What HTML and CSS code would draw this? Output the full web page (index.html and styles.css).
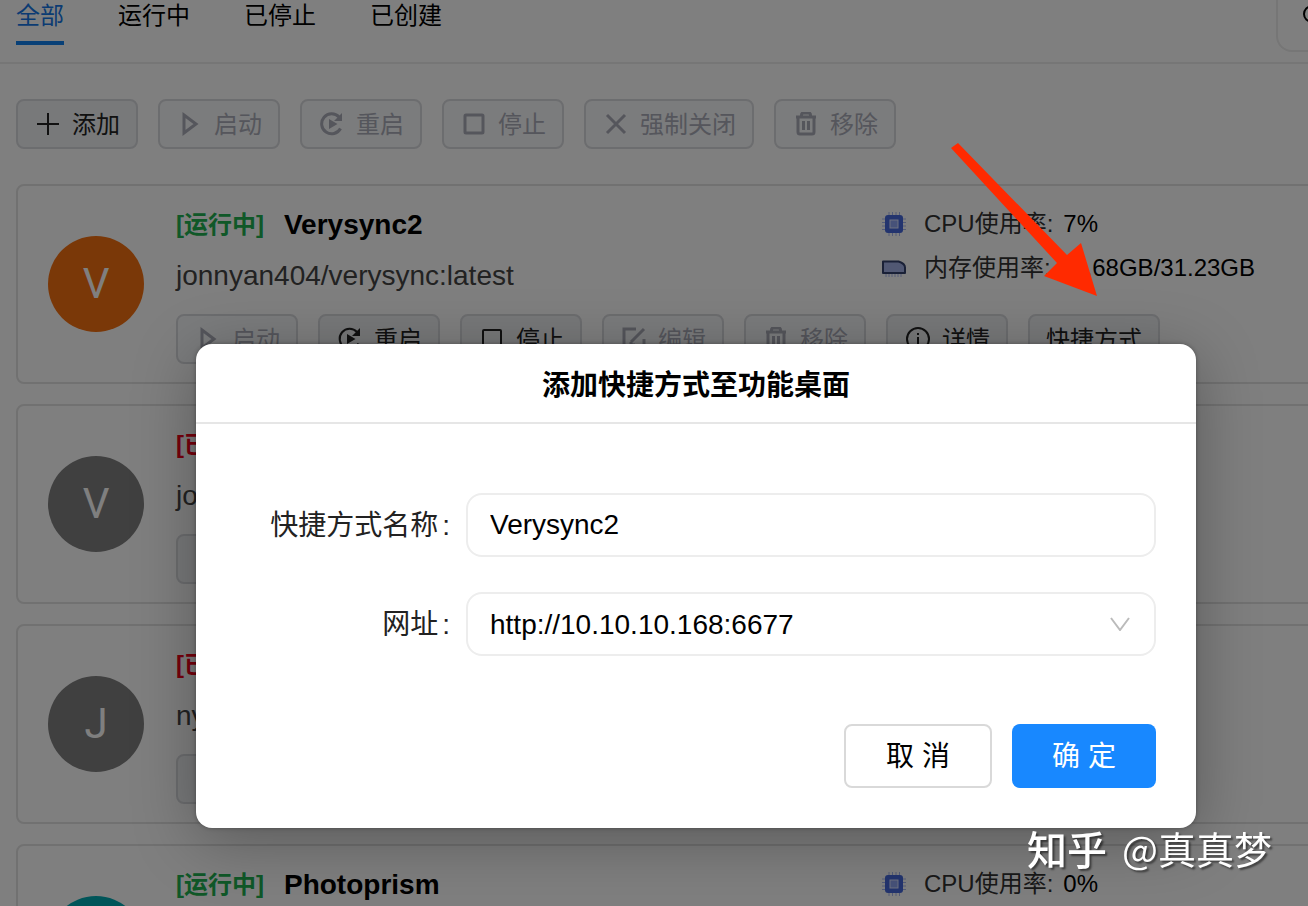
FILE: index.html
```html
<!DOCTYPE html>
<html lang="zh-CN">
<head>
  <meta charset="UTF-8" />
  <title>容器管理</title>
  <meta name="viewport" content="width=device-width, initial-scale=1" />
  <link rel="stylesheet" href="styles.css">
</head>
<body>
  <svg width="0" height="0" class="sprite">
    <symbol id="i-plus" viewBox="0 0 24 24"><path d="M12 1v22M1 12h22" /></symbol>
    <symbol id="i-play" viewBox="0 0 24 24"><path d="M6 3L18 12 6 21z" /></symbol>
    <symbol id="i-restart" viewBox="0 0 24 24">
      <path d="M20.500 16.500A10 10 0 1 1 19 5" />
      <path class="solid" d="M22 1v8H14zM9 7l8.500 5-8.500 5z" />
    </symbol>
    <symbol id="i-stop" viewBox="0 0 24 24"><rect x="3" y="3" width="18" height="18" rx="1" /></symbol>
    <symbol id="i-close" viewBox="0 0 24 24"><path d="M3 3l18 18M21 3L3 21" /></symbol>
    <symbol id="i-trash" viewBox="0 0 24 24">
      <path d="M2 5h20M7.500 5V3q0-2 2-2h5q2 0 2 2V5M4 5v15q0 2 2 2h12q2 0 2-2V5M9.500 9v9M14.500 9v9" />
    </symbol>
    <symbol id="i-edit" viewBox="0 0 24 24">
      <path d="M14 2H2v20h20V12M22 2L9 15M9 15v3h4" />
    </symbol>
    <symbol id="i-info" viewBox="0 0 24 24">
      <circle cx="12" cy="12" r="11" />
      <path d="M12 10v8M12 6v2" />
    </symbol>
    <symbol id="i-cpu" viewBox="0 0 24 24">
      <path d="M7 0v24M10.500 0v24M14 0v24M17.500 0v24M0 7h24M0 10.500h24M0 14h24M0 17.500h24" stroke="#a9b8f0" stroke-width="1" />
      <rect x="3" y="3" width="18" height="18" rx="3" fill="#4668dc" stroke="none" />
      <rect x="8" y="8" width="8" height="8" fill="#8fa5f2" stroke="#dbe2ff" stroke-width="1" />
    </symbol>
    <symbol id="i-mem" viewBox="0 0 24 24">
      <path d="M4 18v3M7 18v3M10 18v3M13 18v3M16 18v3M19 18v3" stroke="#a9b8f0" stroke-width="1" />
      <path d="M1 5.500h15.500q6.500 2 6.500 6V17H1z" fill="#a3b1e6" stroke="#35426e" stroke-width="2" stroke-linejoin="round" />
    </symbol>
  </svg>

  <header class="topbar">
    <nav class="tabs">
      <a href="#all" class="active">全部</a>
      <a href="#running">运行中</a>
      <a href="#stopped">已停止</a>
      <a href="#created">已创建</a>
    </nav>
    <button class="search" type="button" aria-label="搜索">
      <svg class="icon" viewBox="0 0 24 24"><circle cx="10" cy="10" r="8" /><path d="M16 16l6 6" /></svg>
    </button>
  </header>

  <main>
    <div class="btn-row toolbar">
      <button class="btn" type="button"><svg class="icon"><use href="#i-plus" /></svg><span>添加</span></button>
      <button class="btn" type="button" disabled><svg class="icon"><use href="#i-play" /></svg><span>启动</span></button>
      <button class="btn" type="button" disabled><svg class="icon"><use href="#i-restart" /></svg><span>重启</span></button>
      <button class="btn" type="button" disabled><svg class="icon"><use href="#i-stop" /></svg><span>停止</span></button>
      <button class="btn" type="button" disabled><svg class="icon"><use href="#i-close" /></svg><span>强制关闭</span></button>
      <button class="btn" type="button" disabled><svg class="icon"><use href="#i-trash" /></svg><span>移除</span></button>
    </div>

    <section class="card">
      <div class="avatar orange">V</div>
      <div class="card-body">
        <h2><span class="status running">[运行中]</span>Verysync2</h2>
        <p class="image">jonnyan404/verysync:latest</p>
        <ul class="stats">
          <li><svg class="icon"><use href="#i-cpu" /></svg>CPU使用率: <b>7%</b></li>
          <li><svg class="icon"><use href="#i-mem" /></svg>内存使用率: <b>11.68GB/31.23GB</b></li>
        </ul>
        <div class="btn-row">
          <button class="btn" type="button" disabled><svg class="icon"><use href="#i-play" /></svg><span>启动</span></button>
          <button class="btn" type="button"><svg class="icon"><use href="#i-restart" /></svg><span>重启</span></button>
          <button class="btn" type="button"><svg class="icon"><use href="#i-stop" /></svg><span>停止</span></button>
          <button class="btn" type="button" disabled><svg class="icon"><use href="#i-edit" /></svg><span>编辑</span></button>
          <button class="btn" type="button" disabled><svg class="icon"><use href="#i-trash" /></svg><span>移除</span></button>
          <button class="btn" type="button"><svg class="icon"><use href="#i-info" /></svg><span>详情</span></button>
          <button class="btn" type="button"><span>快捷方式</span></button>
        </div>
      </div>
    </section>

    <section class="card">
      <div class="avatar">V</div>
      <div class="card-body">
        <h2><span class="status stopped">[已停止]</span></h2>
        <p class="image">jo</p>
        <div class="btn-row">
          <button class="btn" type="button"><svg class="icon"><use href="#i-play" /></svg><span>启动</span></button>
        </div>
      </div>
    </section>

    <section class="card">
      <div class="avatar">J</div>
      <div class="card-body">
        <h2><span class="status stopped">[已停止]</span></h2>
        <p class="image">ny</p>
        <div class="btn-row">
          <button class="btn" type="button"><svg class="icon"><use href="#i-play" /></svg><span>启动</span></button>
        </div>
      </div>
    </section>

    <section class="card">
      <div class="avatar teal"></div>
      <div class="card-body">
        <h2><span class="status running">[运行中]</span>Photoprism</h2>
        <p class="image"></p>
        <ul class="stats">
          <li><svg class="icon"><use href="#i-cpu" /></svg>CPU使用率: <b>0%</b></li>
        </ul>
      </div>
    </section>
  </main>

  <div class="mask">
    <form class="modal" role="dialog" aria-labelledby="modal-title">
      <h1 id="modal-title">添加快捷方式至功能桌面</h1>
      <div class="fields">
        <label for="name">快捷方式名称<span>:</span></label>
        <input type="text" id="name" value="Verysync2" />
        <label for="url">网址<span>:</span></label>
        <div class="select">
          <select id="url">
            <option>http://10.10.10.168:6677</option>
          </select>
          <svg class="arrow" viewBox="0 0 20 14"><path d="M1 1l9 12 9-12" /></svg>
        </div>
      </div>
      <div class="actions">
        <button class="cancel" type="button">取 消</button>
        <button class="ok" type="button">确 定</button>
      </div>
    </form>
  </div>

  <svg class="pointer" viewBox="0 0 146 153">
    <path d="M0 5L7 0 116 112 130 100 146 153 93 133 106 120z" />
  </svg>
  <div class="watermark"><b>知乎</b><span>@真真梦</span></div>
</body>
</html>
```
FILE: styles.css
```css
* {
  box-sizing: border-box;
}
html {
  height: 100%;
  overflow: hidden;
}
body {
  /* the app is a little wider than the visible window */
  width: calc(100% + 84px);
  height: 100%;
  margin: 0;
  overflow: hidden;
  background: #fff;
  color: #000;
  font-family: "Liberation Sans", "Noto Sans CJK SC", sans-serif;
  font-size: 24px;
}
h1, h2, p, ul {
  margin: 0;
  padding: 0;
}
button, input, select {
  font: inherit;
  color: inherit;
}
.sprite {
  position: absolute;
}
.icon {
  flex: none;
  width: 24px;
  height: 24px;
  fill: none;
  stroke: currentColor;
  stroke-width: 2;
}
.solid {
  fill: currentColor;
  stroke: none;
}

/* top bar */
.topbar {
  display: flex;
  justify-content: space-between;
  height: 64px;
  padding: 0 16px;
  border-bottom: 2px solid #ececec;
}
.tabs {
  display: flex;
  gap: 54px;
}
.tabs a {
  height: 45px;
  line-height: 32px;
  color: #000;
  text-decoration: none;
}
.tabs .active {
  color: #1677e6;
  border-bottom: 4px solid #1080ee;
}
.search {
  width: 100px;
  height: 52px;
  padding: 4px 20px 20px 24px;
  text-align: left;
  background: #fff;
  border: 2px solid #ececec;
  border-top: 0;
  border-radius: 0 0 16px 16px;
}

/* buttons */
.btn-row {
  display: flex;
  gap: 20px;
}
.btn {
  display: flex;
  align-items: center;
  gap: 12px;
  height: 50px;
  padding: 0 16px;
  white-space: nowrap;
  color: #222;
  background: #f0f2f5;
  border: 2px solid #d9dade;
  border-radius: 8px;
}
.btn span {
  padding-bottom: 4px;
}
.btn .icon {
  margin-left: 2px;
}
.btn:disabled {
  color: #aaacb8;
  background: #f7f8fa;
}
.btn:disabled .icon {
  stroke-width: 3;
}
.toolbar {
  padding: 35px 16px;
}

/* container cards */
.card {
  display: flex;
  align-items: center;
  gap: 32px;
  height: 200px;
  margin: 0 16px 20px;
  padding: 18px 30px;
  border: 2px solid #e2e2e2;
  border-radius: 8px;
}
.avatar {
  flex: none;
  width: 96px;
  height: 96px;
  border-radius: 50%;
  background: #808080;
  color: #fff;
  font-size: 42px;
  font-family: Roboto, sans-serif;
  line-height: 96px;
  text-align: center;
}
.orange {
  background: #f57010;
}
.teal {
  background: #00aab2;
}
.card-body {
  flex: 1;
  display: grid;
  grid-template-columns: minmax(0, 706px) 1fr;
  grid-template-rows: 40px 40px 50px;
  align-content: start;
  row-gap: 15px;
  align-self: start;
}
.card h2 {
  display: flex;
  gap: 20px;
  font-size: 28px;
  line-height: 42px;
}
.status {
  font-size: 24px;
}
.running {
  color: #20b050;
}
.stopped {
  color: #f00018;
}
.image {
  grid-column: 1;
  line-height: 34px;
  font-size: 28px;
  color: #444;
}
.stats {
  grid-column: 2;
  grid-row: 1 / 3;
  display: flex;
  flex-direction: column;
  gap: 4px;
  list-style: none;
  color: #333;
}
.stats li {
  display: flex;
  align-items: center;
  line-height: 40px;
  white-space: nowrap;
}
.stats .icon {
  margin-right: 18px;
}
.stats b {
  margin-left: 10px;
  font-weight: normal;
  color: #000;
}
.card .btn-row {
  grid-column: 1 / 3;
  grid-row: 3;
  align-self: end;
}

/* dialog */
.mask {
  position: absolute;
  top: 0;
  left: 0;
  width: calc(100% + 84px);
  height: 100%;
  padding-top: 344px;
  background: rgba(0, 0, 0, 0.5);
}
.modal {
  width: 1000px;
  max-width: 90%;
  margin: 0 auto;
  background: #fff;
  border-radius: 16px;
  box-shadow: 0 0 4px rgba(0, 0, 0, 0.3), 0 12px 64px rgba(0, 0, 0, 0.3);
}
.modal h1 {
  padding: 22px 0 16px;
  font-size: 28px;
  line-height: 40px;
  text-align: center;
  border-bottom: 2px solid #e6e6e6;
}
.fields {
  display: grid;
  grid-template-columns: 254px 1fr;
  align-items: center;
  gap: 35px 16px;
  padding: 69px 40px 0 0;
  font-size: 28px;
}
.fields label {
  padding-bottom: 4px;
  text-align: right;
  color: #222;
}
.fields label span {
  margin-left: 4px;
}
.fields input,
.fields select {
  width: 100%;
  height: 64px;
  padding: 0 22px;
  background: #fff;
  border: 2px solid #ededed;
  border-radius: 16px;
  outline: none;
}
.fields select {
  display: block;
  appearance: none;
}
.select {
  position: relative;
}
.arrow {
  position: absolute;
  top: 25px;
  right: 26px;
  width: 20px;
  height: 14px;
  fill: none;
  stroke: #bbb;
  stroke-width: 2;
  pointer-events: none;
}
.actions {
  display: flex;
  justify-content: flex-end;
  gap: 20px;
  padding: 68px 40px 40px;
}
.actions button {
  width: 144px;
  height: 64px;
  padding: 0 0 4px;
  font-size: 28px;
  border-radius: 8px;
}
.actions .cancel {
  width: 148px;
  background: #fff;
  border: 2px solid #d9d9d9;
}
.actions .ok {
  color: #fff;
  background: #1888ff;
  border: 0;
}

/* annotation and watermark over everything */
.pointer {
  position: absolute;
  top: 143px;
  left: 951px;
  width: 146px;
  height: 153px;
  fill: #ff2a00;
}
.watermark {
  position: fixed;
  right: 36px;
  bottom: 30px;
  display: flex;
  gap: 15px;
  font-size: 38px;
  line-height: 56px;
  font-family: "Noto Sans CJK SC", sans-serif;
  color: #fff;
  text-shadow: 2px 2px 2px rgba(0, 0, 0, 0.5);
}
.watermark b {
  font-size: 40px;
  font-weight: 500;
}
```
